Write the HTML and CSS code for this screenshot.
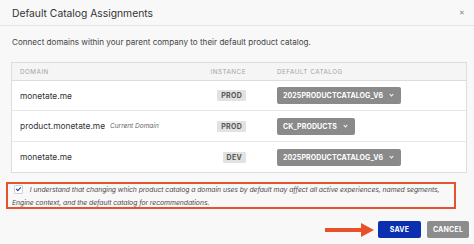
FILE: index.html
```html
<!DOCTYPE html>
<html lang="en">
<head>
    <meta charset="UTF-8">
    <meta name="viewport" content="width=device-width, initial-scale=1.0">
    <title>Default Catalog Assignments</title>
    <link rel="stylesheet" href="styles.css">
</head>
<body>
    <div class="modal">
        <div class="modal-header">
            <h1>Default Catalog Assignments</h1>
            <span class="close">&#x2715;</span>
        </div>

        <div class="modal-body">
            <p class="intro">Connect domains within your parent company to their default product catalog.</p>

            <div class="catalog-table">
                <div class="row head">
                    <div class="cell domain">DOMAIN</div>
                    <div class="cell instance">INSTANCE</div>
                    <div class="cell catalog">DEFAULT CATALOG</div>
                </div>
                <div class="row">
                    <div class="cell domain">monetate.me</div>
                    <div class="cell instance"><span class="badge">PROD</span></div>
                    <div class="cell catalog"><span class="select">2025PRODUCTCATALOG_V6 <i class="chev"></i></span></div>
                </div>
                <div class="row">
                    <div class="cell domain">product.monetate.me <em class="current">Current Domain</em></div>
                    <div class="cell instance"><span class="badge">PROD</span></div>
                    <div class="cell catalog"><span class="select">CK_PRODUCTS <i class="chev"></i></span></div>
                </div>
                <div class="row">
                    <div class="cell domain">monetate.me</div>
                    <div class="cell instance"><span class="badge">DEV</span></div>
                    <div class="cell catalog"><span class="select">2025PRODUCTCATALOG_V6 <i class="chev"></i></span></div>
                </div>
            </div>

            <label class="confirm">
                <span class="check"></span>
                I understand that changing which product catalog a domain uses by default may affect all active experiences, named segments, Engine context, and the default catalog for recommendations.
            </label>

            <div class="actions">
                <svg class="arrow" width="50" height="14" viewBox="0 0 50 14">
                    <rect x="0" y="5" width="38" height="4" fill="#e8502a"/>
                    <polygon points="36,0 49,7 36,14" fill="#e8502a"/>
                </svg>
                <button class="btn save">SAVE</button>
                <button class="btn cancel">CANCEL</button>
            </div>
        </div>
    </div>
</body>
</html>
```

FILE: styles.css
```css
/* Reset básico */
* {
    margin: 0;
    padding: 0;
    box-sizing: border-box;
}

body {
    font-family: Inter, 'Noto Sans', sans-serif;
    background-color: #f8f8f8;
    color: #333;
    width: 474px;
    height: 244px;
    overflow: hidden;
}

/* Cabeçalho */
.modal-header {
    height: 26px;
    padding: 0 9px 0 12px;
    display: flex;
    justify-content: space-between;
    align-items: center;
    border-bottom: 1px solid #e4e4e4;
}

h1 {
    font-size: 10.3px;
    font-weight: 400;
    color: #333;
}

.close {
    font-size: 7px;
    color: #888;
}

.intro {
    font-size: 8.1px;
    color: #444;
    padding: 11px 0 0 12px;
    line-height: 11px;
}

/* Tabela */
.catalog-table {
    margin: 14px 7px 0 11px;
    background-color: white;
    border: 1px solid #dedede;
}

.row {
    display: grid;
    grid-template-columns: 183px 51px 1fr;
    height: 31px;
    border-bottom: 1px solid #e6e6e6;
}

.row:nth-child(2) {
    height: 30px;
}

.row:last-child {
    height: 30px;
    border-bottom: none;
}

.row.head {
    height: 18px;
    background-color: #f5f5f5;
    border-bottom: 1px solid #dcdcdc;
    font-size: 6.3px;
    color: #a3a3a3;
    letter-spacing: 0.5px;
}

.cell {
    display: flex;
    align-items: center;
}

.cell.domain {
    padding-left: 8px;
    font-size: 8.4px;
    color: #333;
}

.head .cell.domain {
    font-size: 6.3px;
    color: #a3a3a3;
}

.current {
    font-size: 6.5px;
    color: #666;
    margin-left: 5px;
}

.cell.instance {
    justify-content: flex-end;
}

.cell.catalog {
    padding-left: 31px;
}

.badge {
    background-color: #e2e2e2;
    color: #555;
    font-size: 7px;
    font-weight: 700;
    letter-spacing: 0.3px;
    padding: 2px 4px 1px;
    border-radius: 1px;
    line-height: 8px;
}

.select {
    display: inline-flex;
    align-items: center;
    height: 17px;
    padding: 0 8px 0 6px;
    background-color: #8a8a8a;
    color: white;
    font-size: 7px;
    font-weight: 700;
    letter-spacing: 0.1px;
    border-radius: 2px;
}

.chev {
    display: inline-block;
    width: 3px;
    height: 3px;
    border-right: 1px solid white;
    border-bottom: 1px solid white;
    transform: rotate(45deg);
    margin: -2px 0 0 7px;
}

/* Confirmação */
.confirm {
    display: block;
    margin: 9px 0 0 6px;
    width: 450px;
    height: 27px;
    border: 2px solid #e4532c;
    padding: 0 2px 0 4px;
    font-size: 6.85px;
    font-style: italic;
    letter-spacing: -0.06px;
    color: #4a4a4a;
    line-height: 12.5px;
}

.check {
    display: inline-block;
    width: 9px;
    height: 9px;
    margin: 0 5px 0 2px;
    vertical-align: -2px;
    background-color: white;
    border: 1px solid #d0d0d0;
    border-radius: 1px;
    position: relative;
}

.check::after {
    content: "";
    position: absolute;
    left: 2px;
    top: 0;
    width: 2px;
    height: 4px;
    border-right: 1.5px solid #1a36b4;
    border-bottom: 1.5px solid #1a36b4;
    transform: rotate(45deg);
}

/* Botões */
.actions {
    display: flex;
    justify-content: flex-end;
    align-items: center;
    gap: 6px;
    margin-top: 12px;
    padding-right: 5px;
}

.arrow {
    margin-right: -3px;
}

.btn {
    height: 17px;
    border: none;
    border-radius: 2px;
    color: white;
    font-family: Inter, sans-serif;
    font-size: 7px;
    font-weight: 700;
    letter-spacing: 0.2px;
}

.save {
    width: 43px;
    background-color: #0b2fb1;
}

.cancel {
    width: 42px;
    background-color: #8c8c8c;
}
```
